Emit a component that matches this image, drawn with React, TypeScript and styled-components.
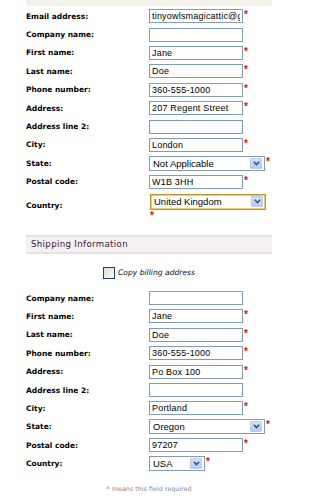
import React from "react";
import styled, { createGlobalStyle, css } from "styled-components";

const Global = createGlobalStyle`
  html, body { margin: 0; padding: 0; background: #ffffff; }
  body { font-family: "DejaVu Sans", Verdana, sans-serif; }
`;

const Page = styled.div`
  width: 329px;
  padding: 0 0 0 26px;
  box-sizing: border-box;
  display: flex;
  flex-direction: column;
`;

const Content = styled.div`
  width: 246px;
  display: flex;
  flex-direction: column;
`;

const TopBand = styled.div`
  height: 6px;
  background: #f2f1ec;
`;

const FormGrid = styled.div<{ $top: number }>`
  margin-top: ${(p) => p.$top}px;
  display: grid;
  grid-template-columns: 123px 1fr;
  grid-auto-rows: minmax(18.4px, auto);
  align-items: center;
`;

const Label = styled.label`
  font-family: "DejaVu Sans", Verdana, sans-serif;
  font-weight: bold;
  font-size: 7.5px;
  color: #000;
  white-space: nowrap;
`;

const Cell = styled.div<{ $stack?: boolean; $padTop?: number }>`
  display: flex;
  align-items: flex-start;
  ${(p) =>
    p.$stack &&
    css`
      flex-direction: column;
    `}
  padding-top: ${(p) => p.$padTop ?? 0}px;
`;

const TextInput = styled.input`
  box-sizing: border-box;
  width: 94px;
  height: 14px;
  margin: 0;
  padding: 0 2px;
  border: 1px solid #7f9db9;
  background: #fff;
  font-family: "Liberation Sans", Arial, sans-serif;
  font-size: 9px;
  letter-spacing: 0.2px;
  color: #000;
  outline: none;
`;

const Req = styled.span<{ $below?: boolean }>`
  color: #e01010;
  font-family: "Liberation Sans", Arial, sans-serif;
  font-weight: bold;
  font-size: 10px;
  line-height: 8px;
  height: 8px;
  margin-left: 1px;
  margin-top: 2px;
`;

const SelectBox = styled.div<{ $w: number; $focus?: boolean }>`
  box-sizing: border-box;
  width: ${(p) => p.$w}px;
  height: ${(p) => (p.$focus ? 16 : 15)}px;
  margin-left: ${(p) => (p.$focus ? 1 : 0)}px;
  border: 1px solid ${(p) => (p.$focus ? "#c8922a" : "#7f9db9")};
  ${(p) =>
    p.$focus &&
    css`
      box-shadow: inset 0 0 0 1px #f2c66a;
    `}
  background: #fff;
  display: flex;
  align-items: center;
  justify-content: space-between;
  padding: 0 2px 0 3px;
  font-family: "Liberation Sans", Arial, sans-serif;
  font-size: 9.5px;
  color: #000;
`;

const ArrowBtn = styled.span`
  box-sizing: border-box;
  width: 12px;
  height: 11px;
  border: 1px solid #b9cbee;
  border-radius: 1px;
  background: linear-gradient(#d3e0fa, #b7caf1);
  display: flex;
  align-items: center;
  justify-content: center;
`;

const Chevron = () => (
  <svg width="7" height="5" viewBox="0 0 7 5">
    <path d="M0.8 0.8 L3.5 3.6 L6.2 0.8" fill="none" stroke="#3c5180" strokeWidth="1.6" />
  </svg>
);

const SectionHeader = styled.div`
  margin-top: 15px;
  height: 19px;
  box-sizing: border-box;
  border-top: 2px solid #e9dde9;
  border-bottom: 2px solid #e9dde9;
  background: #f3f2ee;
  display: flex;
  align-items: center;
  padding-left: 5px;
  font-family: "DejaVu Sans", Verdana, sans-serif;
  font-size: 8.6px;
  letter-spacing: 0.35px;
  color: #3e123e;
`;

const CopyRow = styled.div`
  margin-top: 13px;
  display: flex;
  justify-content: center;
  align-items: center;
  gap: 3px;
  height: 12px;
`;

const CheckBox = styled.span`
  box-sizing: border-box;
  width: 12px;
  height: 12px;
  border: 1px solid #1c3f7a;
  background: linear-gradient(135deg, #dcdcd6, #fbfbfa);
`;

const CopyLabel = styled.span`
  font-family: "DejaVu Sans", Verdana, sans-serif;
  font-style: italic;
  font-size: 7.6px;
  color: #111;
`;

const Footnote = styled.div`
  margin-top: 12px;
  text-align: center;
  font-family: "DejaVu Sans", Verdana, sans-serif;
  font-size: 6.4px;
  color: #8a8a8a;
`;

type FieldDef = {
  label: string;
  value?: string;
  req?: boolean;
  select?: { w: number; focus?: boolean; reqBelow?: boolean };
};

const Field = ({ f }: { f: FieldDef }) => {
  if (f.select) {
    const s = f.select;
    return (
      <>
        <Label>{f.label}</Label>
        <Cell $stack={s.reqBelow} $padTop={s.reqBelow ? 3 : 0}>
          <SelectBox $w={s.w} $focus={s.focus}>
            <span>{f.value}</span>
            <ArrowBtn>
              <Chevron />
            </ArrowBtn>
          </SelectBox>
          {f.req && <Req $below={s.reqBelow}>*</Req>}
        </Cell>
      </>
    );
  }
  return (
    <>
      <Label>{f.label}</Label>
      <Cell>
        <TextInput readOnly value={f.value ?? ""} />
        {f.req && <Req>*</Req>}
      </Cell>
    </>
  );
};

const billing: FieldDef[] = [
  { label: "Email address:", value: "tinyowlsmagicattic@gmail.com", req: true },
  { label: "Company name:" },
  { label: "First name:", value: "Jane", req: true },
  { label: "Last name:", value: "Doe", req: true },
  { label: "Phone number:", value: "360-555-1000", req: true },
  { label: "Address:", value: "207 Regent Street", req: true },
  { label: "Address line 2:" },
  { label: "City:", value: "London", req: true },
  { label: "State:", value: "Not Applicable", req: true, select: { w: 116 } },
  { label: "Postal code:", value: "W1B 3HH", req: true },
  { label: "Country:", value: "United Kingdom", req: true, select: { w: 116, focus: true, reqBelow: true } },
];

const shipping: FieldDef[] = [
  { label: "Company name:" },
  { label: "First name:", value: "Jane", req: true },
  { label: "Last name:", value: "Doe", req: true },
  { label: "Phone number:", value: "360-555-1000", req: true },
  { label: "Address:", value: "Po Box 100", req: true },
  { label: "Address line 2:" },
  { label: "City:", value: "Portland", req: true },
  { label: "State:", value: "Oregon", req: true, select: { w: 116 } },
  { label: "Postal code:", value: "97207", req: true },
  { label: "Country:", value: "USA", req: true, select: { w: 56 } },
];

export default function App() {
  return (
    <>
      <Global />
      <Page>
        <Content>
          <TopBand />
          <FormGrid $top={1}>
            {billing.map((f) => (
              <Field key={"b" + f.label} f={f} />
            ))}
          </FormGrid>
          <SectionHeader>Shipping Information</SectionHeader>
          <CopyRow>
            <CheckBox />
            <CopyLabel>Copy billing address</CopyLabel>
          </CopyRow>
          <FormGrid $top={10}>
            {shipping.map((f) => (
              <Field key={"s" + f.label} f={f} />
            ))}
          </FormGrid>
          <Footnote>* means this field required</Footnote>
        </Content>
      </Page>
    </>
  );
}
